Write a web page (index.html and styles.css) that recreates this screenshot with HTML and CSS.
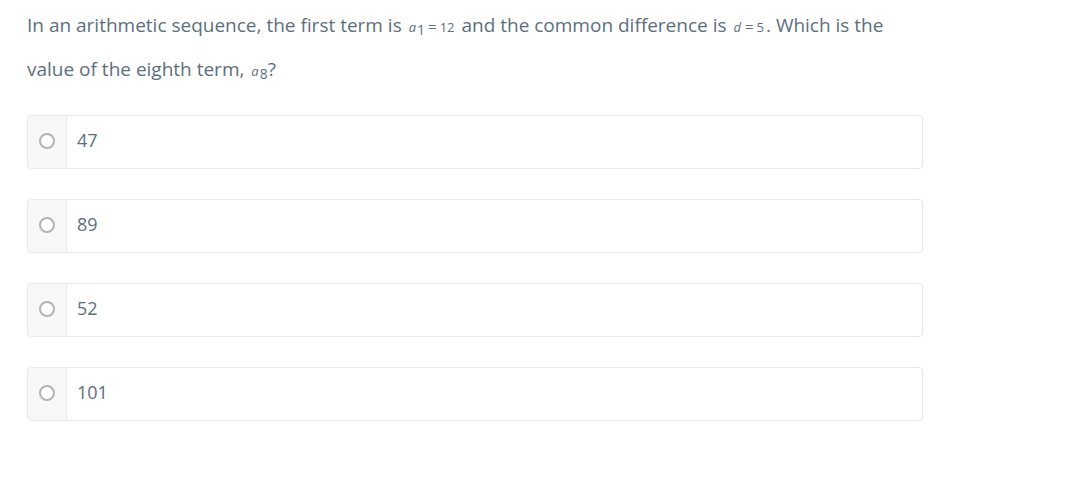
FILE: index.html
```html
<!DOCTYPE html>
<html lang="en">
<head>
<meta charset="utf-8">
<title>Question</title>
<link rel="stylesheet" href="styles.css">
</head>
<body>
<div class="quiz">
  <p class="question">In an arithmetic sequence, the first term is <span class="math"><i>a</i><sub>1</sub><span class="op">=</span>12</span> and the common difference is <span class="math"><i>d</i><span class="op">=</span>5</span>. Which is the value of the eighth term, <span class="math math-end"><i>a</i><sub>8</sub></span>?</p>
  <div class="options">
    <label class="option"><span class="radio-cell"><span class="radio"></span></span><span class="answer">47</span></label>
    <label class="option"><span class="radio-cell"><span class="radio"></span></span><span class="answer">89</span></label>
    <label class="option"><span class="radio-cell"><span class="radio"></span></span><span class="answer">52</span></label>
    <label class="option"><span class="radio-cell"><span class="radio"></span></span><span class="answer">101</span></label>
  </div>
</div>
</body>
</html>
```
FILE: styles.css
```css
html, body {
  margin: 0;
  padding: 0;
  background: #ffffff;
}

body {
  font-family: "Open Sans", "Noto Sans", sans-serif;
  color: #5c6f80;
}

.quiz {
  width: 896px;
  padding: 3px 0 0 27px;
}

.question {
  margin: 0;
  font-size: 19px;
  line-height: 44px;
}

.math {
  font-size: 13px;
  margin: 0 2px;
  line-height: 1;
}

.math-end {
  margin-right: 0;
}

.math i {
  font-style: italic;
  letter-spacing: 1px;
}

.math sub {
  font-size: 14px;
  vertical-align: -3px;
  line-height: 1;
}

.op {
  font-size: 15px;
  line-height: 1;
  margin: 0 3px;
}

.options {
  display: flex;
  flex-direction: column;
  gap: 30px;
  margin-top: 24px;
}

.option {
  display: flex;
  height: 54px;
  box-sizing: border-box;
  border: 1px solid #e8e8e8;
  border-radius: 4px;
  overflow: hidden;
}

.radio-cell {
  width: 38px;
  flex: none;
  display: flex;
  align-items: center;
  justify-content: center;
  padding-bottom: 3px;
  background: #f8f8f8;
  border-right: 1px solid #ececec;
}

.radio {
  width: 12px;
  height: 12px;
  border: 2px solid #b3b3b3;
  border-radius: 50%;
  background: #ffffff;
}

.answer {
  display: flex;
  align-items: center;
  padding: 0 0 5px 10px;
  font-size: 18px;
}
```
